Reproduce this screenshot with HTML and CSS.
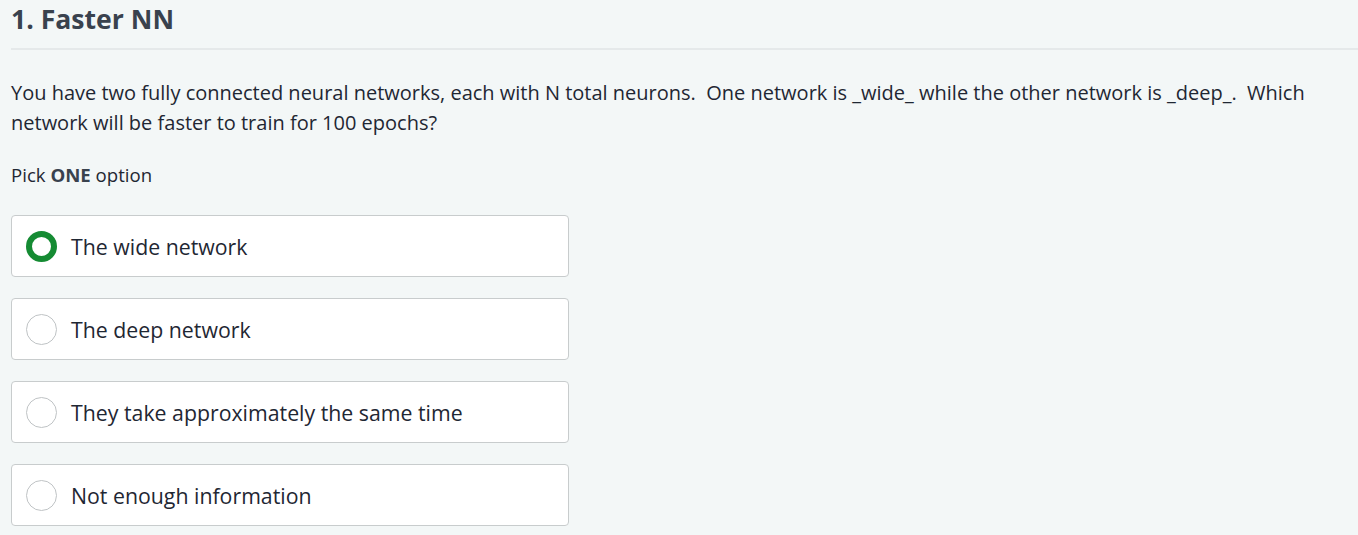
FILE: index.html
```html
<!DOCTYPE html>
<html>
<head>
<meta charset="utf-8">
<link rel="stylesheet" href="styles.css">
</head>
<body>
<div class="page">
  <h1 class="title">1. Faster NN</h1>
  <div class="divider"></div>
  <p class="question">You have two fully connected neural networks, each with N total neurons.&nbsp; One network is _wide_ while the other network is _deep_.&nbsp; Which network will be faster to train for 100 epochs?</p>
  <p class="pick">Pick <b>ONE</b> option</p>
  <div class="options">
    <div class="option"><span class="radio selected"></span><span class="label">The wide network</span></div>
    <div class="option"><span class="radio"></span><span class="label">The deep network</span></div>
    <div class="option"><span class="radio"></span><span class="label">They take approximately the same time</span></div>
    <div class="option"><span class="radio"></span><span class="label">Not enough information</span></div>
  </div>
</div>
</body>
</html>
```
FILE: styles.css
```css
html, body {
  margin: 0;
  padding: 0;
  background: #f3f7f7;
}
body {
  font-family: "Open Sans", "Noto Sans", sans-serif;
  color: #39424e;
}
.page {
  padding: 0 0 0 11px;
}
.title {
  margin: 0;
  padding-top: 1px;
  font-size: 26.6px;
  font-weight: 700;
  line-height: 36px;
  color: #39424e;
}
.divider {
  margin-top: 11px;
  height: 2px;
  background: #e5e9ea;
}
.question {
  margin: 28px 0 0 0;
  font-size: 20px;
  line-height: 30px;
  color: #1f2733;
  padding-right: 40px;
}
.pick {
  margin: 24px 0 0 0;
  font-size: 18.6px;
  line-height: 26px;
  color: #1f2733;
}
.pick b {
  color: #39424e;
}
.options {
  margin-top: 27px;
  display: flex;
  flex-direction: column;
  gap: 21px;
}
.option {
  box-sizing: border-box;
  width: 558px;
  height: 62px;
  background: #fff;
  border: 1px solid #c8cccd;
  border-radius: 4px;
  display: flex;
  align-items: center;
  padding-left: 14px;
}
.radio {
  box-sizing: border-box;
  width: 31px;
  height: 31px;
  border-radius: 50%;
  border: 1px solid #bfc3c5;
  background: #fff;
  flex: none;
}
.radio.selected {
  border: 6px solid #158b33;
}
.label {
  margin-left: 14px;
  font-size: 21.3px;
  color: #1f2733;
}
```
